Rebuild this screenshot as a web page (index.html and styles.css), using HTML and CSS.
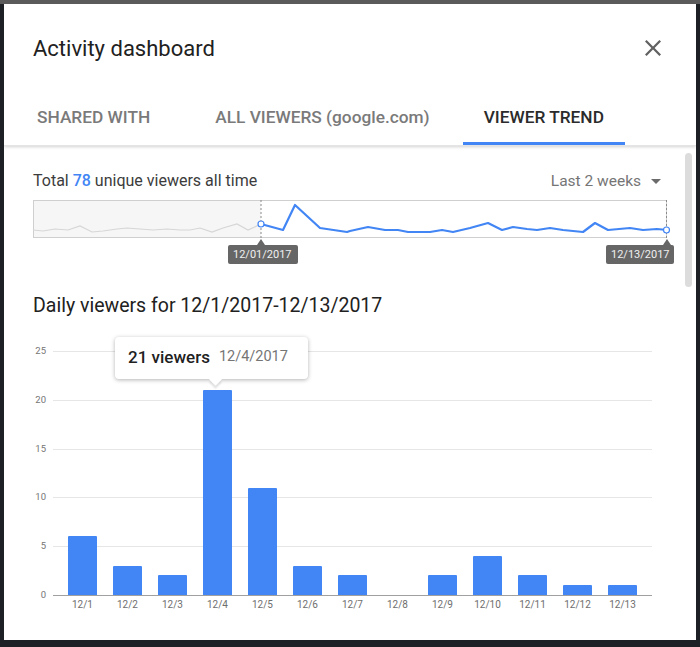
FILE: index.html
```html
<!DOCTYPE html>
<html>
<head>
<meta charset="utf-8">
<link rel="stylesheet" href="styles.css">
</head>
<body>
<div class="page">
  <div class="dialog">
    <header class="head">
      <div class="title-row">
        <h1 class="title">Activity dashboard</h1>
        <svg class="close" viewBox="5 5 14 14" width="16" height="16"><path d="M19 6.41L17.59 5 12 10.59 6.41 5 5 6.41 10.59 12 5 17.59 6.41 19 12 13.41 17.59 19 19 17.59 13.41 12z" fill="#616161"/></svg>
      </div>
      <nav class="tabs">
        <div class="tab t1">SHARED WITH</div>
        <div class="tab t2">ALL VIEWERS (google.com)</div>
        <div class="tab t3 active">VIEWER TREND</div>
      </nav>
    </header>
    <main class="content">
      <div class="total-row">
        <div class="total">Total <span class="num">78</span> unique viewers all time</div>
        <div class="range">Last 2 weeks <span class="caret"></span></div>
      </div>
      <div class="overview">
        <svg class="ov-svg" width="634" height="38" viewBox="0 0 634 38">
          <rect x="0.5" y="0.5" width="227.5" height="37" fill="#f6f6f6"/>
          <rect x="0.5" y="0.5" width="633" height="37" fill="none" stroke="#cfcfcf"/>
          <polyline fill="none" stroke="#d6d6d6" stroke-width="1.2" points="0,30 10,31 22,29 35,30 47,26 59,32 70,31 84,29 94,28 107,29 120,30 134,29 147,30 157,30 167,28 179,32 190,28 204,24 215,30 228,24"/>
          <polyline fill="none" stroke="#4285f4" stroke-width="2.2" stroke-linejoin="round" points="228,24 250,30 262,5 287,28 314,32 317,31 335,27 352,30 365,30 375,32 397,32 409,30 420,32 437,28 455,23 469,30 480,27 494,29 504,30 517,28 530,30 550,32 562,23 575,30 597,28 610,30 624,29 634,30"/>
          <line x1="228" y1="0" x2="228" y2="40" stroke="#8a8a8a" stroke-dasharray="2 2"/>
          <line x1="633.5" y1="0" x2="633.5" y2="40" stroke="#8a8a8a" stroke-dasharray="2 2"/>
          <circle cx="228" cy="24" r="3" fill="#fff" stroke="#4285f4" stroke-width="1.2"/>
          <circle cx="633.5" cy="30" r="3" fill="#fff" stroke="#4285f4" stroke-width="1.2"/>
        </svg>
        <div class="ov-label lab-start">12/01/2017</div>
        <div class="ov-label lab-end">12/13/2017</div>
      </div>
      <h2 class="daily">Daily viewers for 12/1/2017-12/13/2017</h2>
      <div class="chart">
        <div class="yaxis">
          <span>25</span><span>20</span><span>15</span><span>10</span><span>5</span><span>0</span>
        </div>
        <div class="plot-col">
          <div class="plot">
            <div class="gridlines">
              <div class="gl"></div><div class="gl"></div><div class="gl"></div><div class="gl"></div><div class="gl"></div>
            </div>
            <div class="bars">
              <div class="slot"><div class="bar" style="height:58.6px"></div></div>
              <div class="slot"><div class="bar" style="height:29.3px"></div></div>
              <div class="slot"><div class="bar" style="height:19.5px"></div></div>
              <div class="slot"><div class="bar" style="height:205px"></div></div>
              <div class="slot"><div class="bar" style="height:107.4px"></div></div>
              <div class="slot"><div class="bar" style="height:29.3px"></div></div>
              <div class="slot"><div class="bar" style="height:19.5px"></div></div>
              <div class="slot"></div>
              <div class="slot"><div class="bar" style="height:19.5px"></div></div>
              <div class="slot"><div class="bar" style="height:39px"></div></div>
              <div class="slot"><div class="bar" style="height:19.5px"></div></div>
              <div class="slot"><div class="bar" style="height:9.8px"></div></div>
              <div class="slot"><div class="bar" style="height:9.8px"></div></div>
            </div>
          </div>
          <div class="xaxis">
            <span>12/1</span><span>12/2</span><span>12/3</span><span>12/4</span><span>12/5</span><span>12/6</span><span>12/7</span><span>12/8</span><span>12/9</span><span>12/10</span><span>12/11</span><span>12/12</span><span>12/13</span>
          </div>
        </div>
        <div class="tooltip">
          <span class="tt-main">21 viewers</span><span class="tt-date">12/4/2017</span>
        </div>
      </div>
    </main>
    <div class="thumb"></div>
  </div>
</div>
</body>
</html>
```
FILE: styles.css
```css
* { box-sizing: border-box; }
html, body { margin: 0; padding: 0; }
body {
  background: #1d2024;
  font-family: Roboto, "Liberation Sans", Arial, sans-serif;
  width: 700px;
  height: 647px;
  overflow: hidden;
}
.page {
  height: 647px;
  border-top: 4px solid #5b5b5b;
  padding: 0 4px 7px 4px;
}
.dialog {
  position: relative;
  background: #fff;
  width: 692px;
  height: 636px;
  overflow: hidden;
  display: flex;
  flex-direction: column;
}
.head {
  position: relative;
  z-index: 2;
  background: #fff;
  box-shadow: 0 1px 3px rgba(0,0,0,0.18);
  border-bottom: 1px solid #e4e4e4;
}
.title-row {
  display: flex;
  justify-content: space-between;
  align-items: flex-start;
  padding: 0 35px 0 29px;
  height: 86px;
}
.title {
  margin: 32px 0 0 0;
  font-size: 22px;
  line-height: 26px;
  font-weight: 400;
  color: #212121;
}
.close { margin-top: 36px; }
.tabs {
  display: flex;
  padding-left: 12px;
  height: 55px;
}
.tab {
  padding: 17px 21px 0;
  font-size: 17.3px;
  line-height: 20px;
  font-weight: 500;
  color: #7a7a7a;
}
.t1 { margin-right: 23px; }
.t2 { margin-right: 12px; }
.tab.active {
  color: #2b2b2b;
  border-bottom: 3px solid #4285f4;
}
.content {
  flex: 1;
  padding: 25px 29px 0 29px;
}
.total-row {
  display: flex;
  justify-content: space-between;
  align-items: center;
  height: 20px;
}
.total {
  font-size: 16px;
  line-height: 20px;
  color: #3c3c3c;
}
.num { color: #4285f4; font-weight: 500; }
.range {
  font-size: 15.5px;
  line-height: 20px;
  color: #757575;
  margin-right: 6px;
  display: flex;
  align-items: center;
}
.caret {
  display: inline-block;
  margin-left: 10px;
  width: 0;
  height: 0;
  border-left: 5px solid transparent;
  border-right: 5px solid transparent;
  border-top: 5px solid #6b6b6b;
}
.overview {
  position: relative;
  margin-top: 9px;
  width: 634px;
  height: 38px;
}
.ov-svg { display: block; overflow: visible; }
.ov-label {
  position: absolute;
  top: 45px;
  height: 19px;
  padding: 0 5px;
  background: #666;
  color: #f0f0f0;
  font-size: 11px;
  line-height: 19px;
  border-radius: 2px;
}
.ov-label::before {
  content: "";
  position: absolute;
  top: -6px;
  width: 0; height: 0;
  border-left: 4px solid transparent;
  border-right: 4px solid transparent;
  border-bottom: 6px solid #666;
}
.lab-start { left: 195px; width: 70px; }
.lab-start::before { left: 29px; }
.lab-end { left: 573px; width: 68px; }
.lab-end::before { right: 3px; }
.daily {
  margin: 56px 0 0 0;
  font-size: 19.5px;
  line-height: 24px;
  font-weight: 400;
  color: #212121;
}
.chart {
  position: relative;
  margin-top: 27px;
  display: grid;
  grid-template-columns: 20px 599px;
}
.yaxis {
  display: flex;
  flex-direction: column;
  align-items: flex-end;
  gap: 36.8px;
  padding-right: 7px;
  font-size: 9.5px;
  line-height: 12px;
  color: #757575;
}
.plot-col { padding-top: 6px; }
.plot { display: grid; }
.gridlines, .bars { grid-area: 1 / 1; }
.gridlines {
  display: flex;
  flex-direction: column;
  border-bottom: 1px solid #a0a0a0;
}
.gl {
  height: 48.8px;
  border-top: 1px solid #e6e6e6;
}
.bars {
  display: flex;
  align-items: flex-end;
  padding: 0 7px 1px;
}
.slot {
  width: 45px;
  display: flex;
  justify-content: center;
  align-items: flex-end;
}
.bar {
  width: 29px;
  background: #4285f4;
  border-radius: 1px 1px 0 0;
}
.xaxis {
  display: flex;
  padding: 0 7px;
  margin-top: 3px;
  font-size: 10px;
  line-height: 12px;
  color: #6e6e6e;
}
.xaxis span { width: 45px; text-align: center; }
.tooltip {
  position: absolute;
  left: 82px;
  top: -8px;
  width: 193px;
  height: 42px;
  background: #fff;
  border-radius: 4px;
  box-shadow: 0 1px 4px rgba(0,0,0,0.3);
  display: flex;
  align-items: center;
  padding: 0 0 3px 13px;
  gap: 9px;
}
.tooltip::after {
  content: "";
  position: absolute;
  left: 96px;
  bottom: -5px;
  width: 9px;
  height: 9px;
  background: #fff;
  transform: rotate(45deg);
  box-shadow: 2px 2px 2px rgba(0,0,0,0.12);
}
.tt-main { font-size: 17px; font-weight: 500; color: #212121; }
.tt-date { font-size: 14.5px; color: #757575; }
.thumb {
  position: absolute;
  left: 681px;
  top: 149px;
  width: 7px;
  height: 134px;
  background: #dcdcdc;
  border-radius: 4px;
}
```
